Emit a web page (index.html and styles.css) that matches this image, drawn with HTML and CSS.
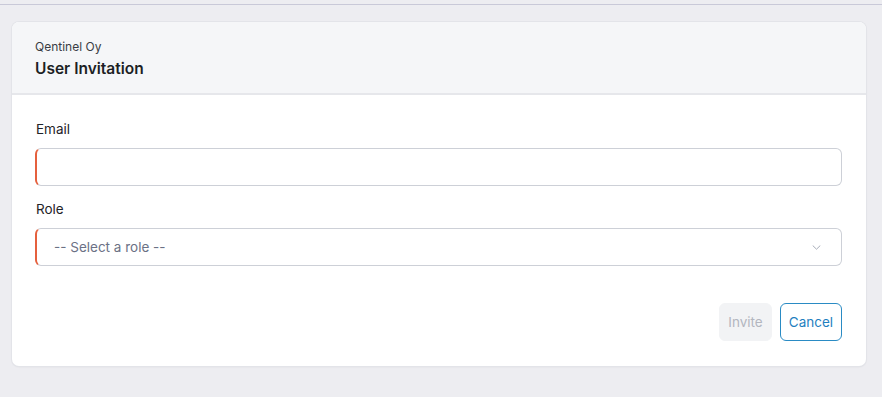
FILE: index.html
```html
<!DOCTYPE html>
<html>
<head>
<meta charset="utf-8">
<link rel="stylesheet" href="styles.css">
</head>
<body>
<div class="strip"></div>
<main class="page">
  <section class="card">
    <header class="card-header">
      <div class="org">Qentinel Oy</div>
      <h1 class="title">User Invitation</h1>
    </header>
    <form class="card-body">
      <label class="label">Email</label>
      <div class="input invalid"></div>
      <label class="label role-label">Role</label>
      <div class="input select invalid">
        <span class="placeholder">-- Select a role --</span>
        <svg class="chev" width="9" height="5" viewBox="0 0 9 5"><path d="M1 0.8l3.5 3.4 3.5-3.4" fill="none" stroke="#a7acb8" stroke-width="1" stroke-linecap="round" stroke-linejoin="round"/></svg>
      </div>
      <div class="actions">
        <button type="button" class="btn btn-disabled">Invite</button>
        <button type="button" class="btn btn-outline">Cancel</button>
      </div>
    </form>
  </section>
</main>
</body>
</html>
```
FILE: styles.css
```css
html, body {
  margin: 0;
  padding: 0;
  background: #ededf1;
  font-family: Inter, "Noto Sans", sans-serif;
  color: #1f2328;
}
.strip {
  height: 4px;
  background: #ededf1;
}
.page {
  border-top: 1px solid #c9c9d8;
  padding: 17px 16px 30px 12px;
}
.card {
  background: #fff;
  border-radius: 7px;
  box-shadow: 0 0 0 1px #e3e4e9, 0 1px 2px rgba(0,0,0,0.08);
  overflow: hidden;
}
.card-header {
  background: #f5f6f8;
  border-bottom: 2px solid #e6e7eb;
  padding: 17px 23px 0;
  height: 54px;
}
.org {
  font-size: 12px;
  color: #3a3d44;
  line-height: 16px;
}
.title {
  margin: 4px 0 0;
  font-size: 15.5px;
  font-weight: 600;
  line-height: 20px;
  color: #1c1f24;
}
.card-body {
  display: flex;
  flex-direction: column;
  padding: 26px 24px 25px 23px;
}
.label {
  font-size: 13.5px;
  line-height: 16px;
  color: #1f2328;
  margin: 0 0 11px 1px;
}
.role-label {
  margin-top: 15px;
}
.input {
  height: 38px;
  box-sizing: border-box;
  border: 1px solid #cdd0d7;
  border-radius: 6px;
  background: #fff;
}
.input.invalid {
  border-left: 2px solid #e5603d;
}
.select {
  display: flex;
  align-items: center;
  justify-content: space-between;
  padding: 0 20px 0 17px;
}
.placeholder {
  font-size: 13.5px;
  color: #6b7185;
}
.chev {
  display: block;
}
.actions {
  display: flex;
  justify-content: flex-end;
  gap: 8px;
  margin-top: 37px;
}
.btn {
  font-family: Inter, "Noto Sans", sans-serif;
  font-size: 13.5px;
  height: 38px;
  border-radius: 6px;
  padding: 0 6px;
  cursor: pointer;
}
.btn-disabled {
  background: #f2f3f5;
  border: 1px solid #f2f3f5;
  color: #b3b6bf;
  width: 53px;
}
.btn-outline {
  background: #fff;
  border: 1px solid #2a8bc4;
  color: #1f7fbf;
  width: 62px;
}
```
